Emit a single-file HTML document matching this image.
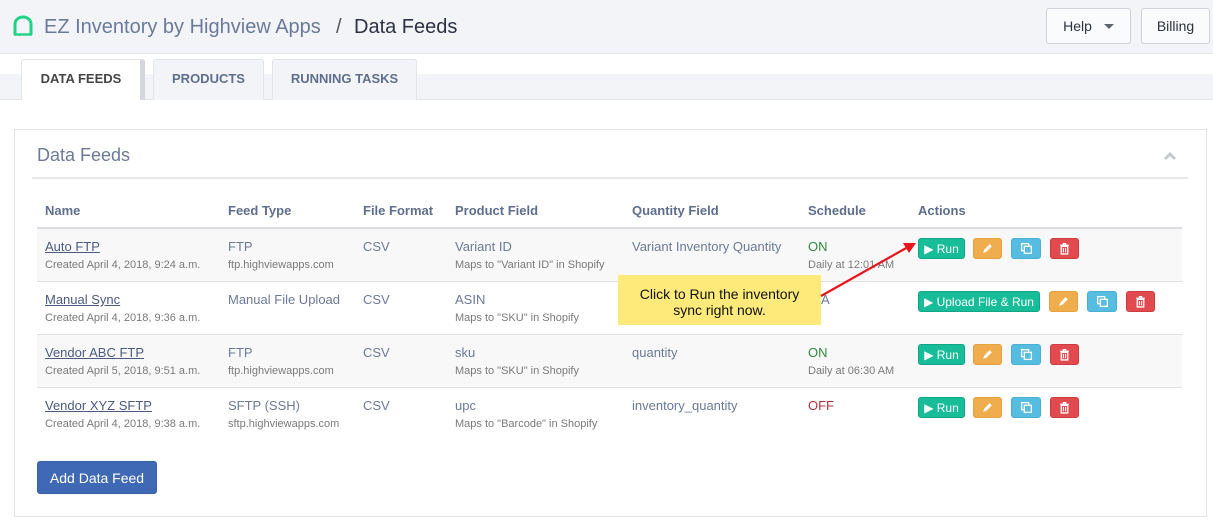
<!DOCTYPE html>
<html><head><style>
*{box-sizing:border-box;margin:0;padding:0}
body{width:1213px;height:526px;position:relative;background:#fff;font-family:"Liberation Sans",sans-serif;overflow:hidden;color:#6b7a99}
.a{position:absolute;white-space:nowrap}
.m{font-size:13px;color:#6b7a99}
.s{font-size:11px;color:#7a7a7a}
.lnk{font-size:13px;color:#4a5a80;text-decoration:underline}
.th{font-size:13px;font-weight:bold;color:#5f6e8e}
.btn{position:absolute;height:21px;border-radius:3px;color:#fff;font-size:12px;display:flex;align-items:center;justify-content:center}
.g{background:#17bc98;border:1px solid #12a585}
.o{background:#f0ad4e;border:1px solid #e6a23f}
.b{background:#57bde0;border:1px solid #48b0d4}
.r{background:#e14b4f;border:1px solid #cf3c40}
.tab{position:absolute;top:59px;height:41px;background:#f3f4f8;border:1px solid #e3e5ea;border-bottom:none;border-radius:3px 3px 0 0;font-size:13px;font-weight:bold;color:#5f6e8e;display:flex;align-items:center;justify-content:center;padding-bottom:4px}
</style></head><body>
<div class="a" style="left:0;top:0;width:1213px;height:54px;background:#f3f4f8;border-bottom:1px solid #e3e5ea"></div>
<svg class="a" style="left:12px;top:15px" width="22" height="22" viewBox="0 0 22 22"><path d="M3 20 V9 A8 7 0 0 1 19 9 V20" fill="none" stroke="#22d38a" stroke-width="3"/><path d="M2 19.5 H20" stroke="#22d38a" stroke-width="2.5"/></svg>
<div class="a" style="left:44px;top:16px;font-size:20px;color:#6b7a99">EZ Inventory by Highview Apps</div>
<div class="a" style="left:336px;top:16px;font-size:20px;color:#555">/</div>
<div class="a" style="left:354px;top:16px;font-size:20px;color:#2d3142">Data Feeds</div>
<div class="a" style="left:1046px;top:8px;width:85px;height:36px;border:1px solid #cdd1d8;border-radius:3px;background:#fafbfc;font-size:14px;color:#2d3142;display:flex;align-items:center;justify-content:center">Help<span style="margin-left:12px;width:0;height:0;border-left:5px solid transparent;border-right:5px solid transparent;border-top:5px solid #5f6470"></span></div>
<div class="a" style="left:1141px;top:8px;width:69px;height:36px;border:1px solid #cdd1d8;border-radius:3px;background:#fafbfc;font-size:14px;color:#2d3142;display:flex;align-items:center;justify-content:center">Billing</div>
<div class="a" style="left:0;top:74px;width:1213px;height:26px;background:#f3f4f8;border-bottom:1px solid #e3e5ea"></div>
<div class="tab" style="left:21px;width:124px;background:#fff;color:#444;border-right:5px solid #d5d7dc;height:41px">DATA FEEDS</div>
<div class="tab" style="left:153px;width:111px">PRODUCTS</div>
<div class="tab" style="left:272px;width:145px">RUNNING TASKS</div>

<div class="a" style="left:14px;top:129px;width:1193px;height:388px;border:1px solid #e3e5ea"></div>
<div class="a" style="left:37px;top:145px;font-size:18px;color:#6b7a99">Data Feeds</div>
<svg class="a" style="left:1163px;top:151px" width="14" height="10" viewBox="0 0 14 10"><path d="M2 8 L7 3 L12 8" fill="none" stroke="#c5c9d0" stroke-width="3"/></svg>
<div class="a" style="left:32px;top:177px;width:1156px;height:2px;background:#e5e7eb"></div>

<div class="th a" style="left:45px;top:203px">Name</div>
<div class="th a" style="left:228px;top:203px">Feed Type</div>
<div class="th a" style="left:363px;top:203px">File Format</div>
<div class="th a" style="left:455px;top:203px">Product Field</div>
<div class="th a" style="left:632px;top:203px">Quantity Field</div>
<div class="th a" style="left:808px;top:203px">Schedule</div>
<div class="th a" style="left:918px;top:203px">Actions</div>
<div class="a" style="left:37px;top:227px;width:1145px;height:2px;background:#dcdde0"></div>

<div class="a" style="left:37px;top:229px;width:1145px;height:53px;background:#f8f8f8;border-bottom:1px solid #e0e0e0"></div>
<div class="a" style="left:37px;top:282px;width:1145px;height:53px;background:#fff;border-bottom:1px solid #e0e0e0"></div>
<div class="a" style="left:37px;top:335px;width:1145px;height:53px;background:#f8f8f8;border-bottom:1px solid #e0e0e0"></div>

<div class="lnk a" style="left:45px;top:239px">Auto FTP</div><div class="s a" style="left:45px;top:259px">Created April 4, 2018, 9:24 a.m.</div>
<div class="m a" style="left:228px;top:239px">FTP</div><div class="s a" style="left:228px;top:259px">ftp.highviewapps.com</div>
<div class="m a" style="left:363px;top:239px">CSV</div>
<div class="m a" style="left:455px;top:239px">Variant ID</div><div class="s a" style="left:455px;top:259px">Maps to "Variant ID" in Shopify</div>
<div class="m a" style="left:632px;top:239px">Variant Inventory Quantity</div>
<div class="m a" style="left:808px;top:239px;color:#2e8b3e">ON</div><div class="s a" style="left:808px;top:259px">Daily at 12:01 AM</div>

<div class="lnk a" style="left:45px;top:292px">Manual Sync</div><div class="s a" style="left:45px;top:312px">Created April 4, 2018, 9:36 a.m.</div>
<div class="m a" style="left:228px;top:292px">Manual File Upload</div>
<div class="m a" style="left:363px;top:292px">CSV</div>
<div class="m a" style="left:455px;top:292px">ASIN</div><div class="s a" style="left:455px;top:312px">Maps to "SKU" in Shopify</div>
<div class="m a" style="left:808px;top:292px">N/A</div>

<div class="lnk a" style="left:45px;top:345px">Vendor ABC FTP</div><div class="s a" style="left:45px;top:365px">Created April 5, 2018, 9:51 a.m.</div>
<div class="m a" style="left:228px;top:345px">FTP</div><div class="s a" style="left:228px;top:365px">ftp.highviewapps.com</div>
<div class="m a" style="left:363px;top:345px">CSV</div>
<div class="m a" style="left:455px;top:345px">sku</div><div class="s a" style="left:455px;top:365px">Maps to "SKU" in Shopify</div>
<div class="m a" style="left:632px;top:345px">quantity</div>
<div class="m a" style="left:808px;top:345px;color:#2e8b3e">ON</div><div class="s a" style="left:808px;top:365px">Daily at 06:30 AM</div>

<div class="lnk a" style="left:45px;top:398px">Vendor XYZ SFTP</div><div class="s a" style="left:45px;top:418px">Created April 4, 2018, 9:38 a.m.</div>
<div class="m a" style="left:228px;top:398px">SFTP (SSH)</div><div class="s a" style="left:228px;top:418px">sftp.highviewapps.com</div>
<div class="m a" style="left:363px;top:398px">CSV</div>
<div class="m a" style="left:455px;top:398px">upc</div><div class="s a" style="left:455px;top:418px">Maps to "Barcode" in Shopify</div>
<div class="m a" style="left:632px;top:398px">inventory_quantity</div>
<div class="m a" style="left:808px;top:398px;color:#b5323a">OFF</div>

<div class="btn g" style="left:918px;top:238px;width:47px">▶ Run</div>
<div class="btn g" style="left:918px;top:291px;width:122px">▶ Upload File &amp; Run</div>
<div class="btn g" style="left:918px;top:344px;width:47px">▶ Run</div>
<div class="btn g" style="left:918px;top:397px;width:47px">▶ Run</div>

<svg width="0" height="0" style="position:absolute"><defs>
<symbol id="pen" viewBox="0 0 12 12"><path d="M2 10 L3 7 L8 2 L10 4 L5 9 Z" fill="#fff"/></symbol>
<symbol id="cp" viewBox="0 0 12 12"><rect x="1.5" y="1.5" width="6.5" height="6.5" fill="none" stroke="#fff" stroke-width="1.2"/><rect x="4" y="4" width="6.5" height="6.5" fill="#57bde0" stroke="#fff" stroke-width="1.2"/></symbol>
<symbol id="tr" viewBox="0 0 12 12"><path d="M2 3 H10 M5 3 V1.5 H7 V3" stroke="#fff" stroke-width="1.2" fill="none"/><path d="M3 4 H9 V11 H3 Z" fill="none" stroke="#fff" stroke-width="1.2"/><path d="M5 5.5 V9.5 M7 5.5 V9.5" stroke="#fff" stroke-width="1"/></symbol>
</defs></svg>

<div class="btn o" style="left:973px;top:238px;width:29px"><svg width="13" height="13"><use href="#pen"/></svg></div>
<div class="btn b" style="left:1011px;top:238px;width:30px"><svg width="13" height="13"><use href="#cp"/></svg></div>
<div class="btn r" style="left:1050px;top:238px;width:29px"><svg width="13" height="13"><use href="#tr"/></svg></div>

<div class="btn o" style="left:1049px;top:291px;width:29px"><svg width="13" height="13"><use href="#pen"/></svg></div>
<div class="btn b" style="left:1087px;top:291px;width:30px"><svg width="13" height="13"><use href="#cp"/></svg></div>
<div class="btn r" style="left:1126px;top:291px;width:29px"><svg width="13" height="13"><use href="#tr"/></svg></div>

<div class="btn o" style="left:973px;top:344px;width:29px"><svg width="13" height="13"><use href="#pen"/></svg></div>
<div class="btn b" style="left:1011px;top:344px;width:30px"><svg width="13" height="13"><use href="#cp"/></svg></div>
<div class="btn r" style="left:1050px;top:344px;width:29px"><svg width="13" height="13"><use href="#tr"/></svg></div>

<div class="btn o" style="left:973px;top:397px;width:29px"><svg width="13" height="13"><use href="#pen"/></svg></div>
<div class="btn b" style="left:1011px;top:397px;width:30px"><svg width="13" height="13"><use href="#cp"/></svg></div>
<div class="btn r" style="left:1050px;top:397px;width:29px"><svg width="13" height="13"><use href="#tr"/></svg></div>

<div class="a" style="left:618px;top:275px;width:203px;height:50px;background:#fdea7a;color:#111;font-size:14px;text-align:center;line-height:16px;padding-top:11px;white-space:normal">Click to Run the inventory<br>sync right now.</div>
<svg class="a" style="left:0;top:0" width="1213" height="526"><line x1="821" y1="296" x2="908" y2="247" stroke="#e8141c" stroke-width="2.2"/><path d="M916 243 L903 243 L909 253 Z" fill="#e8141c"/></svg>

<div class="a" style="left:37px;top:461px;width:120px;height:33px;background:#3f69b4;border:1px solid #3660a8;border-radius:3px;color:#fff;font-size:14px;display:flex;align-items:center;justify-content:center">Add Data Feed</div>
</body></html>
